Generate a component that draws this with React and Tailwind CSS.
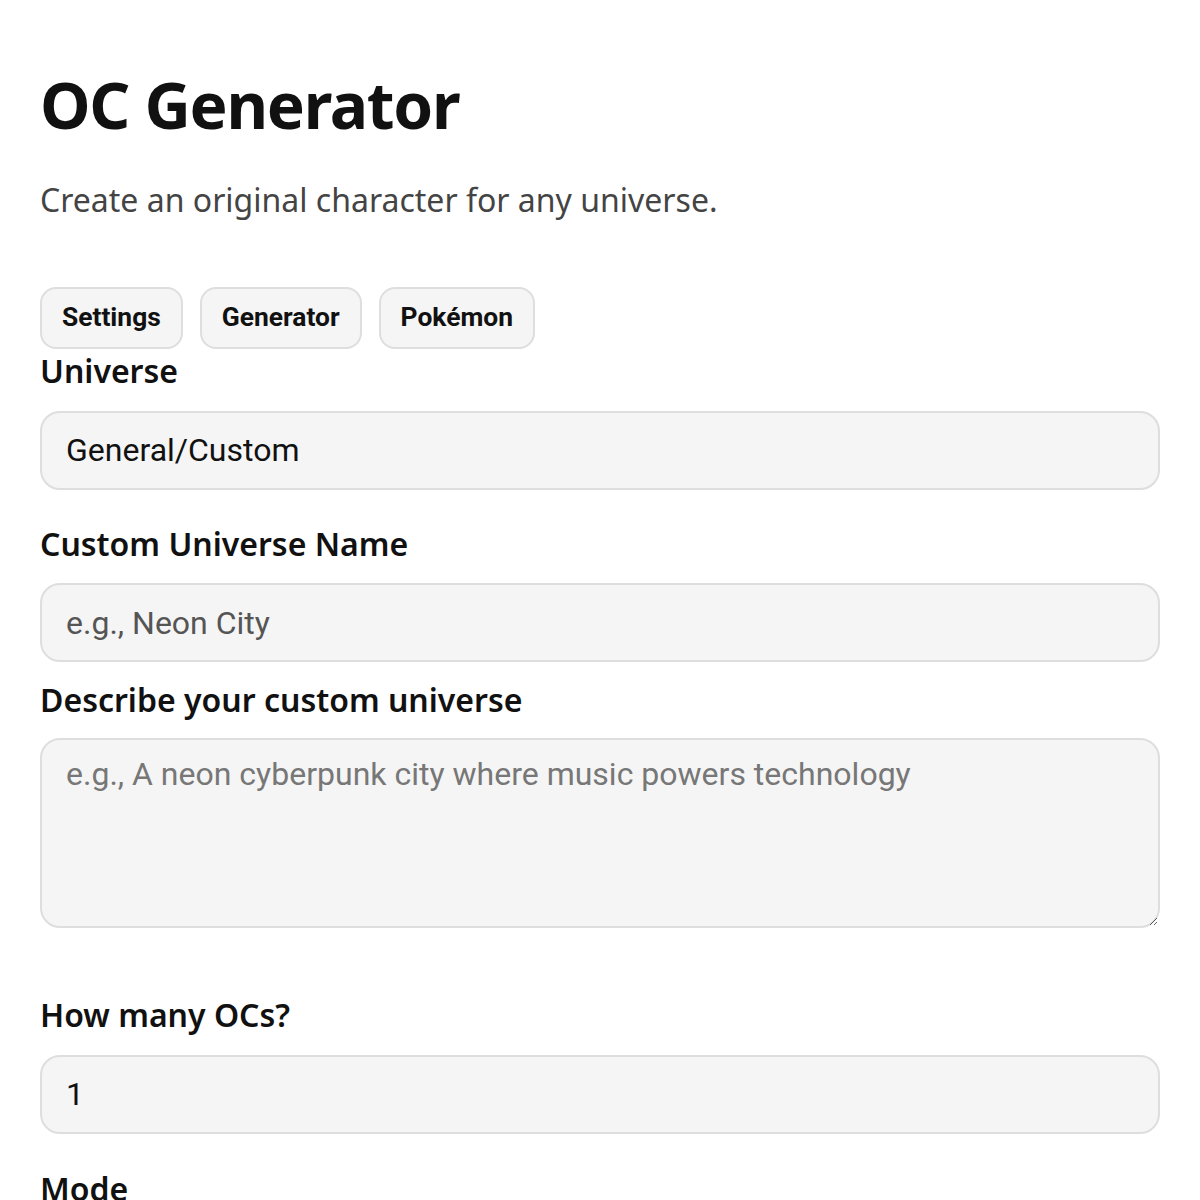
export default function App() {
  const label = "block text-[32px] font-semibold text-[#111] leading-[1.4]";
  const input =
    "block w-full h-[79px] rounded-[20px] border-2 border-[#dedede] bg-[#f5f5f5] px-[24px] text-[32px] text-[#111] placeholder:text-[#555] outline-none";
  const btn =
    "h-[62px] rounded-[16px] border-2 border-[#dedede] bg-[#f5f5f5] px-[20px] text-[26.4px] font-bold text-[#111]";
  const roboto = { fontFamily: 'Roboto, sans-serif' };
  return (
    <div className="min-h-[1200px] bg-white px-[40px] pt-[67px]" style={{ fontFamily: '"Noto Sans", sans-serif' }}>
      <h1 className="text-[64px] font-bold leading-[1.2] tracking-[-0.02em] text-[#111]">OC Generator</h1>
      <p className="mt-[32px] text-[32px] leading-[1.5] text-[#444]">Create an original character for any universe.</p>
      <div className="mt-[63px] flex gap-[17px]" style={roboto}>
        <button className={btn}>Settings</button>
        <button className={btn}>Generator</button>
        <button className={btn}>Pokémon</button>
      </div>
      <label className={label}>Universe</label>
      <div className="mt-[17px]" style={roboto}>
        <input className={input} defaultValue="General/Custom" readOnly />
      </div>
      <label className={`${label} mt-[32px]`}>Custom Universe Name</label>
      <div className="mt-[17px]" style={roboto}>
        <input className={input} placeholder="e.g., Neon City" />
      </div>
      <label className={`${label} mt-[16px]`}>Describe your custom universe</label>
      <div className="mt-[15px]" style={roboto}>
        <textarea
          className="block w-full h-[190px] rounded-[20px] border-2 border-[#dedede] bg-[#f5f5f5] px-[24px] py-[15px] text-[32px] leading-[1.2] text-[#111] placeholder:text-[#777] outline-none"
          placeholder="e.g., A neon cyberpunk city where music powers technology"
        />
      </div>
      <label className={`${label} mt-[65px]`}>How many OCs?</label>
      <div className="mt-[17px]" style={roboto}>
        <input className={input} defaultValue="1" readOnly />
      </div>
      <label className={`${label} mt-[33px]`}>Mode</label>
    </div>
  );
}
